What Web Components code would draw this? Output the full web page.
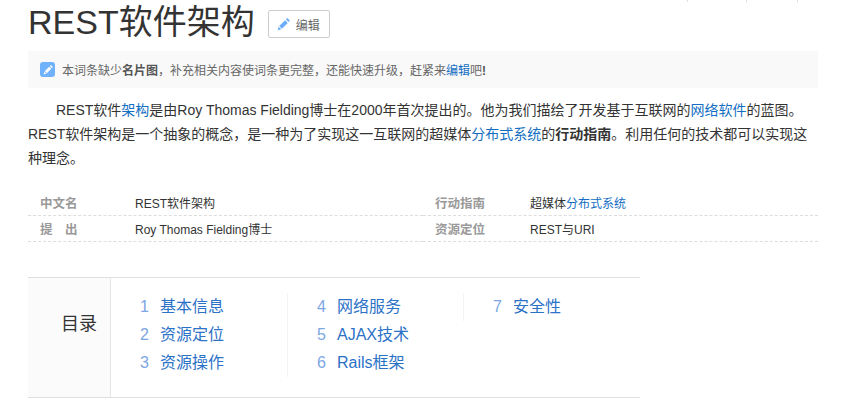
<!DOCTYPE html>
<html lang="zh">
<head>
<meta charset="utf-8">
<title>REST软件架构</title>
<style>
html, body { margin: 0; padding: 0; background: #fff; }
body { font-family: "Liberation Sans", "Noto Sans CJK SC", sans-serif; color: #333; overflow: hidden; }
</style>
</head>
<body>
<wiki-page>
    <nav-ticks></nav-ticks>
    <wiki-title>REST软件架构</wiki-title>
    <notice-bar>本词条缺少<b>名片图</b>，补充相关内容使词条更完整，还能快速升级，赶紧来<wiki-link>编辑</wiki-link>吧<b>!</b></notice-bar>
    <lemma-summary>REST软件<wiki-link>架构</wiki-link>是由Roy Thomas Fielding博士在2000年首次提出的。他为我们描绘了开发基于互联网的<wiki-link>网络软件</wiki-link>的蓝图。REST软件架构是一个抽象的概念，是一种为了实现这一互联网的超媒体<wiki-link>分布式系统</wiki-link>的<b>行动指南</b>。利用任何的技术都可以实现这种理念。</lemma-summary>
    <basic-info>
        <info-row label="中文名">REST软件架构</info-row>
        <info-row label="行动指南">超媒体<wiki-link>分布式系统</wiki-link></info-row>
        <info-row label="提　出">Roy Thomas Fielding博士</info-row>
        <info-row label="资源定位">REST与URI</info-row>
    </basic-info>
    <toc-box>
        <toc-col>
            <toc-item num="1">基本信息</toc-item>
            <toc-item num="2">资源定位</toc-item>
            <toc-item num="3">资源操作</toc-item>
        </toc-col>
        <toc-col>
            <toc-item num="4">网络服务</toc-item>
            <toc-item num="5">AJAX技术</toc-item>
            <toc-item num="6">Rails框架</toc-item>
        </toc-col>
        <toc-col>
            <toc-item num="7">安全性</toc-item>
        </toc-col>
    </toc-box>
</wiki-page>

<script>
const PENCIL = `<path d="M8.7 2.4l2.9 2.9-6.3 6.3-2.9-2.9z"/><path d="M9.6 1.5l.8-.8c.4-.4 1-.4 1.4 0l1.5 1.5c.4.4.4 1 0 1.4l-.8.8z"/><path d="M1.8 9.4l2.8 2.8-3.8 1z"/>`;

function define(name, html) {
    customElements.define(name, class extends HTMLElement {
        constructor() {
            super();
            // no whitespace between tags, it shows up as gaps round inline hosts
            this.attachShadow({ mode: "open" }).innerHTML = html.trim().replace(/>\s+</g, "><");
        }
        connectedCallback() {
            // labels and numbers come in as attributes
            this.shadowRoot.querySelectorAll("[data-attr]").forEach((node) => {
                node.textContent = this.getAttribute(node.dataset.attr);
            });
        }
    });
}

define("wiki-page", `
    <style>
    :host { display: block; width: 790px; margin-left: 28px; }
    </style>
    <slot></slot>
`);

// bottom of a nav bar cut off by the top of the window
define("nav-ticks", `
    <style>
    :host { display: flex; height: 2px; padding-left: 659px; gap: 58px; }
    i { width: 1px; background: #ddd; }
    i:last-child { margin-left: -8px; }
    </style>
    <i></i><i></i><i></i>
`);

define("edit-button", `
    <style>
    :host {
        display: flex;
        align-items: center;
        box-sizing: border-box;
        width: 62px;
        height: 28px;
        padding-left: 8px;
        gap: 6px;
        border: 1px solid #ccc;
        border-radius: 2px;
        font-size: 12px;
        color: #666;
    }
    svg { width: 13px; height: 13px; fill: #6cacfb; }
    </style>
    <svg viewBox="0 0 14 14">${PENCIL}</svg><slot></slot>
`);

define("wiki-title", `
    <style>
    :host { display: flex; align-items: flex-start; height: 49px; gap: 13px; }
    h1 { margin: 0; font-size: 34px; font-weight: 400; line-height: 40px; color: #333; }
    edit-button { margin-top: 8px; }
    </style>
    <h1><slot></slot></h1>
    <edit-button>编辑</edit-button>
`);

define("notice-bar", `
    <style>
    :host {
        display: flex;
        align-items: center;
        height: 37px;
        padding-left: 12px;
        gap: 7px;
        background: #f9f9f9;
        font-size: 12px;
        color: #666;
    }
    .icon {
        display: flex;
        align-items: center;
        justify-content: center;
        width: 15px;
        height: 15px;
        border-radius: 3px;
        background: #70b1fb;
    }
    svg { width: 10px; height: 10px; fill: #fff; }
    ::slotted(b) { color: #555; }
    </style>
    <span class="icon"><svg viewBox="0 0 14 14">${PENCIL}</svg></span>
    <span><slot></slot></span>
`);

define("wiki-link", `
    <style>
    :host { color: #136ec2; }
    </style>
    <slot></slot>
`);

define("lemma-summary", `
    <style>
    :host {
        display: block;
        margin-top: 10px;
        font-size: 14px;
        line-height: 24px;
        text-indent: 28px;
        color: #333;
    }
    </style>
    <slot></slot>
`);

define("basic-info", `
    <style>
    :host {
        display: grid;
        grid-template-columns: 395px 395px;
        margin-top: 20px;
    }
    </style>
    <slot></slot>
`);

define("info-row", `
    <style>
    :host {
        display: flex;
        align-items: center;
        height: 25px;
        padding-left: 12px;
        border-bottom: 1px dashed #ddd;
        font-size: 12px;
        color: #333;
    }
    .label { width: 95px; font-size: 12.5px; font-weight: 700; color: #999; }
    </style>
    <span class="label" data-attr="label"></span>
    <span><slot></slot></span>
`);

define("toc-box", `
    <style>
    :host {
        display: flex;
        box-sizing: border-box;
        width: 612px;
        height: 121px;
        margin-top: 35px;
        border-top: 1px solid #e0e0e0;
        border-bottom: 1px solid #e0e0e0;
    }
    .head {
        box-sizing: border-box;
        width: 83px;
        padding: 33px 13px 0 0;
        border-right: 1px solid #e6e6e6;
        background: #fbfbfb;
        font-size: 18px;
        line-height: 26px;
        text-align: right;
        color: #333;
    }
    .cols { display: flex; align-items: flex-start; padding-top: 15px; }
    </style>
    <div class="head">目录</div>
    <div class="cols"><slot></slot></div>
`);

// the divider is as tall as the column's own rows
define("toc-col", `
    <style>
    :host {
        display: block;
        box-sizing: border-box;
        width: 176px;
        padding-left: 29px;
        border-left: 1px solid #f3f3f3;
    }
    :host(:first-child) { border-left: 0; }
    </style>
    <slot></slot>
`);

define("toc-item", `
    <style>
    :host {
        display: flex;
        height: 28px;
        font-size: 16px;
        line-height: 28px;
        color: #2c72c7;
    }
    .num { width: 20px; color: #7ca6e4; }
    </style>
    <span class="num" data-attr="num"></span>
    <span><slot></slot></span>
`);
</script>
</body>
</html>
